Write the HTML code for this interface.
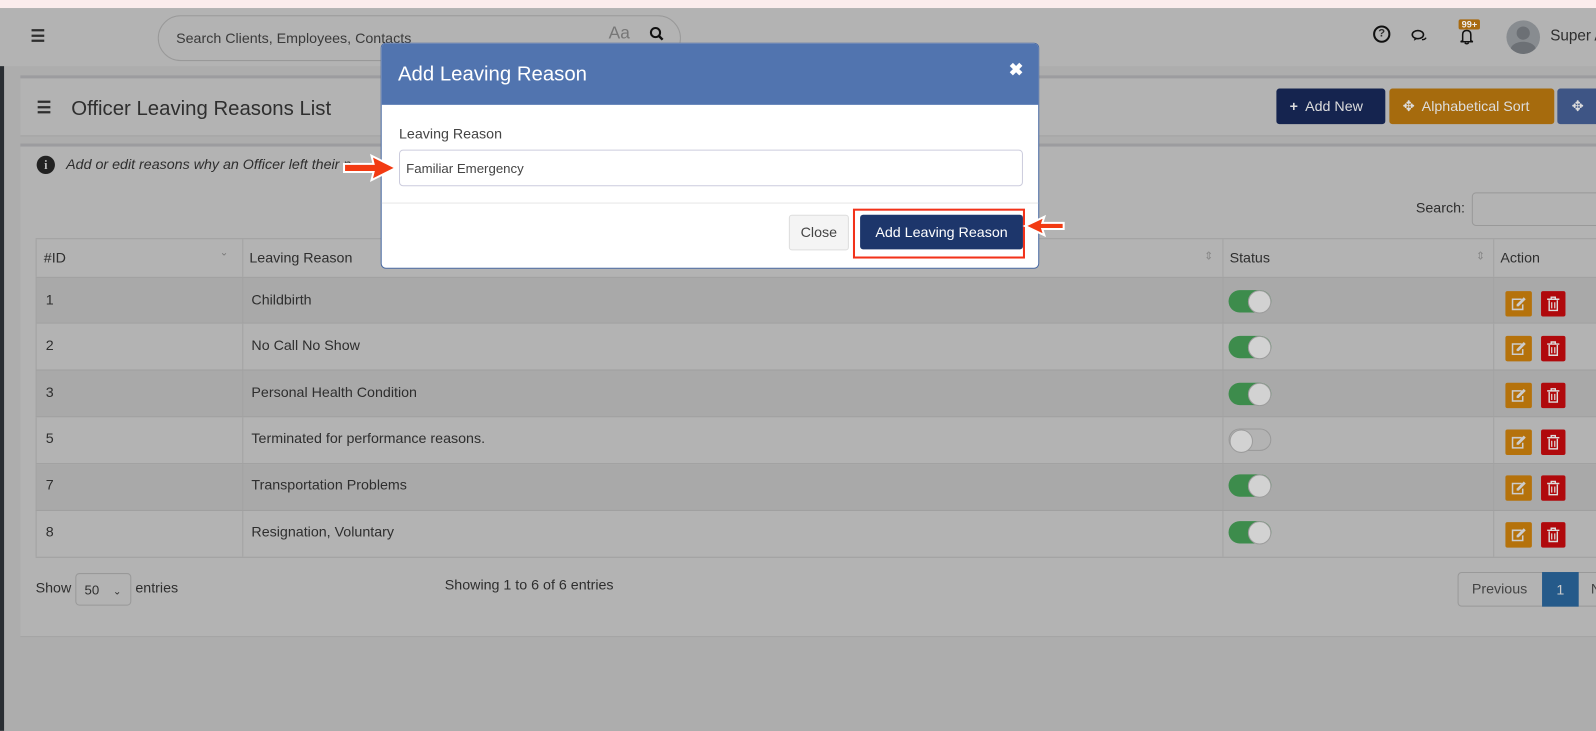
<!DOCTYPE html>
<html><head><meta charset="utf-8"><style>
*{box-sizing:border-box;margin:0;padding:0}
html,body{width:1596px;height:718px;overflow:hidden;background:#adadad}
#w{position:absolute;left:0;top:0;width:1600px;height:706px;transform:scale(1.01786);transform-origin:0 0;font-family:"Liberation Sans",sans-serif;color:#2e2e2e;font-size:14px}
.a{position:absolute;white-space:nowrap}
.row{position:absolute;left:35px;width:1561px;height:46px;border-bottom:1px solid #a0a0a0}
.cell{position:absolute;top:0;height:100%;border-left:1px solid #a3a3a3}
.tog{position:absolute;left:1207px;width:42px;height:22px;border-radius:11px;background:#3d8c4c}
.tog::after{content:"";position:absolute;right:0;top:0;width:21px;height:21px;border-radius:50%;background:#d2d2d2;border:1px solid #9c9c9c}
.tog.off{background:#b3b3b3;border:1px solid #999}
.tog.off::after{left:0;right:auto}
.ed{position:absolute;left:1479px;width:26px;height:25px;background:#b5720b;border-radius:2px}
.dl{position:absolute;left:1514px;width:24px;height:25px;background:#b0090c;border-radius:2px}
.ed svg,.dl svg{position:absolute;left:5px;top:5px}
</style></head><body><div id="w">
<div class="a" style="left:0;top:0;width:1600px;height:8px;background:#fbecec"></div>
<div class="a" style="left:0;top:8px;width:1600px;height:57px;background:#b3b3b3"></div>
<div class="a" style="left:30px;top:26px;font-size:16px;font-weight:bold">&#9776;</div>
<div class="a" style="left:155px;top:15px;width:514px;height:45px;border:1px solid #999;border-radius:23px;"></div>
<div class="a" style="left:173px;top:29px;font-size:14px;color:#3a3a3a">Search Clients, Employees, Contacts</div>
<div class="a" style="left:598px;top:23px;font-size:17px;color:#777">Aa</div>
<svg class="a" style="left:638px;top:26px" width="14" height="14"><circle cx="6" cy="6" r="4.5" fill="none" stroke="#111" stroke-width="2"/><path d="M9 9 L13 13" stroke="#111" stroke-width="2.4"/></svg>
<div class="a" style="left:1349px;top:25px;width:17px;height:17px;border:2px solid #111;border-radius:50%;font-size:11px;font-weight:bold;text-align:center;line-height:13px">?</div>
<svg class="a" style="left:1386px;top:28px" width="16" height="14"><ellipse cx="7" cy="6" rx="5.5" ry="4" fill="none" stroke="#111" stroke-width="1.6"/><path d="M4 9 L3 12 L7 10" fill="#111"/><path d="M11 11 Q14 11 15 9" fill="none" stroke="#111" stroke-width="1.4"/></svg>
<div class="a" style="left:1433px;top:19px;background:#a86a10;color:#eee;font-size:9px;padding:0 3px;border-radius:2px;font-weight:bold">99+</div>
<svg class="a" style="left:1434px;top:28px" width="14" height="16"><path d="M3 12 L3 6 Q3 2 7 2 Q11 2 11 6 L11 12 L13 13 L1 13 Z" fill="none" stroke="#111" stroke-width="1.5"/><path d="M5 14 Q7 16 9 14" fill="none" stroke="#111" stroke-width="1.3"/></svg>
<div class="a" style="left:1480px;top:20px;width:33px;height:33px;border-radius:50%;background:#888c90;overflow:hidden"><div class="a" style="left:10px;top:6px;width:13px;height:13px;border-radius:50%;background:#6c7075"></div><div class="a" style="left:4px;top:21px;width:25px;height:16px;border-radius:50%;background:#6c7075"></div></div>
<div class="a" style="left:1523px;top:27px;font-size:15px">Super A</div>
<div class="a" style="left:0;top:65px;width:4px;height:653px;background:#2a2e33"></div>

<div class="a" style="left:20px;top:74px;width:1580px;height:60px;background:#b3b3b3;border-top:3px solid #9c9c9f;border-bottom:1px solid #a2a2a2"></div>
<div class="a" style="left:36px;top:96px;font-size:16px;font-weight:bold">&#9776;</div>
<div class="a" style="left:70px;top:96px;font-size:20px;color:#2f2f2f">Officer Leaving Reasons List</div>
<div class="a" style="left:1254px;top:87px;width:107px;height:35px;background:#15244f;border-radius:3px;color:#ddd;font-size:14px;line-height:35px;padding-left:13px"><b>+</b>&nbsp; Add New</div>
<div class="a" style="left:1365px;top:87px;width:162px;height:35px;background:#a66b0d;border-radius:3px;color:#ddd;font-size:14px;line-height:35px;padding-left:13px">&#10021;&nbsp; Alphabetical Sort</div>
<div class="a" style="left:1530px;top:87px;width:70px;height:35px;background:#3e5585;border-radius:3px;color:#ddd;line-height:35px;padding-left:14px">&#10021;</div>

<div class="a" style="left:20px;top:141px;width:1580px;height:485px;background:#b3b3b3;border-top:3px solid #9c9c9f;border-bottom:1px solid #a2a2a2"></div>
<div class="a" style="left:36px;top:153px;width:18px;height:18px;border-radius:50%;background:#222;color:#bbb;font-size:12px;font-weight:bold;text-align:center;line-height:18px;font-family:'Liberation Serif',serif">i</div>
<div class="a" style="left:65px;top:153px;font-size:14px;font-style:italic">Add or edit reasons why an Officer left their p</div>
<div class="a" style="left:1391px;top:196px;font-size:14px">Search:</div>
<div class="a" style="left:1446px;top:189px;width:160px;height:33px;border:1px solid #999;border-radius:4px"></div>

<div class="row" style="top:234px;height:39px;background:#b3b3b3;border-top:1px solid #a0a0a0"><div class="cell" style="left:0"></div><div class="cell" style="left:203px"></div><div class="cell" style="left:1166px"></div><div class="cell" style="left:1432px"></div></div>
<div class="a" style="left:43px;top:245px">#ID</div><div class="a" style="left:216px;top:243px;font-size:10px;color:#777">&#8964;</div>
<div class="a" style="left:245px;top:245px">Leaving Reason</div><div class="a" style="left:1183px;top:245px;font-size:11px;color:#888">&#8661;</div>
<div class="a" style="left:1208px;top:245px">Status</div><div class="a" style="left:1450px;top:245px;font-size:11px;color:#888">&#8661;</div>
<div class="a" style="left:1474px;top:245px">Action</div>

<div class="row" style="top:273px;height:45px;background:#a9a9a9"><div class="cell" style="left:0"></div><div class="cell" style="left:203px"></div><div class="cell" style="left:1166px"></div><div class="cell" style="left:1432px"></div></div>
<div class="row" style="top:318px;background:#b3b3b3"><div class="cell" style="left:0"></div><div class="cell" style="left:203px"></div><div class="cell" style="left:1166px"></div><div class="cell" style="left:1432px"></div></div>
<div class="row" style="top:364px;background:#a9a9a9"><div class="cell" style="left:0"></div><div class="cell" style="left:203px"></div><div class="cell" style="left:1166px"></div><div class="cell" style="left:1432px"></div></div>
<div class="row" style="top:410px;background:#b3b3b3"><div class="cell" style="left:0"></div><div class="cell" style="left:203px"></div><div class="cell" style="left:1166px"></div><div class="cell" style="left:1432px"></div></div>
<div class="row" style="top:456px;background:#a9a9a9"><div class="cell" style="left:0"></div><div class="cell" style="left:203px"></div><div class="cell" style="left:1166px"></div><div class="cell" style="left:1432px"></div></div>
<div class="row" style="top:502px;background:#b3b3b3"><div class="cell" style="left:0"></div><div class="cell" style="left:203px"></div><div class="cell" style="left:1166px"></div><div class="cell" style="left:1432px"></div></div>

<div class="a" style="left:45px;top:286px">1</div><div class="a" style="left:247px;top:286px">Childbirth</div>
<div class="a" style="left:45px;top:331px">2</div><div class="a" style="left:247px;top:331px">No Call No Show</div>
<div class="a" style="left:45px;top:377px">3</div><div class="a" style="left:247px;top:377px">Personal Health Condition</div>
<div class="a" style="left:45px;top:422px">5</div><div class="a" style="left:247px;top:422px">Terminated for performance reasons.</div>
<div class="a" style="left:45px;top:468px">7</div><div class="a" style="left:247px;top:468px">Transportation Problems</div>
<div class="a" style="left:45px;top:514px">8</div><div class="a" style="left:247px;top:514px">Resignation, Voluntary</div>

<div class="tog" style="top:285px"></div><div class="tog" style="top:330px"></div><div class="tog" style="top:376px"></div><div class="tog off" style="top:421px"></div><div class="tog" style="top:466px"></div><div class="tog" style="top:512px"></div>

<div id="acts"></div>
<script>
var t=[286,330,376,422,467,513],h='';
var e='<svg width="16" height="15"><path d="M11 3 L2 3 L2 13 L12 13 L12 8" fill="none" stroke="#ccc" stroke-width="1.5"/><path d="M6 10 L6 8 L13 1 L15 3 L8 10 Z" fill="#ccc"/></svg>';
var d='<svg width="14" height="15"><path d="M1 3 L13 3 M5 3 L5 1 L9 1 L9 3" stroke="#ddd" stroke-width="1.4" fill="none"/><path d="M3 4 L3 14 L11 14 L11 4" stroke="#ddd" stroke-width="1.4" fill="none"/><path d="M5.5 6 L5.5 12 M8.5 6 L8.5 12" stroke="#ddd" stroke-width="1.2"/></svg>';
t.forEach(function(y){h+='<div class="ed" style="top:'+y+'px">'+e+'</div><div class="dl" style="top:'+y+'px">'+d+'</div>';});
document.getElementById('acts').innerHTML=h;
</script>

<div class="a" style="left:35px;top:569px">Show</div>
<div class="a" style="left:74px;top:563px;width:55px;height:32px;border:1px solid #999;border-radius:4px;font-size:13px;padding:8px 0 0 8px">50 <span style="margin-left:10px;font-size:10px">&#8964;</span></div>
<div class="a" style="left:133px;top:569px">entries</div>
<div class="a" style="left:437px;top:566px">Showing 1 to 6 of 6 entries</div>
<div class="a" style="left:1432px;top:562px;width:170px;height:34px;border:1px solid #999;border-radius:4px"></div>
<div class="a" style="left:1446px;top:570px;color:#444">Previous</div>
<div class="a" style="left:1515px;top:562px;width:36px;height:34px;background:#255a8a;color:#ccc;text-align:center;line-height:34px">1</div>
<div class="a" style="left:1563px;top:570px;color:#444">N</div>

<div class="a" style="left:374px;top:42px;width:647px;height:222px;background:#fff;border:1px solid #4a6aa3;border-radius:5px;overflow:hidden">
 <div class="a" style="left:0;top:0;width:647px;height:60px;background:#5174af"></div>
 <div class="a" style="left:16px;top:19px;font-size:20px;color:#fff">Add Leaving Reason</div>
 <div class="a" style="left:616px;top:16px;font-size:17px;color:#fff;font-weight:bold">&#10006;</div>
 <div class="a" style="left:17px;top:80px;color:#444">Leaving Reason</div>
 <div class="a" style="left:17px;top:104px;width:613px;height:36px;border:1px solid #ccd;border-radius:4px"></div>
 <div class="a" style="left:24px;top:115px;font-size:13px;color:#444">Familiar Emergency</div>
 <div class="a" style="left:0;top:156px;width:647px;height:1px;background:#e6e6e6"></div>
 <div class="a" style="left:400px;top:168px;width:59px;height:35px;background:#f4f4f4;border:1px solid #ddd;border-radius:3px;text-align:center;line-height:33px;color:#444">Close</div>
 <div class="a" style="left:470px;top:168px;width:160px;height:34px;background:#1d366b;border-radius:3px;text-align:center;line-height:34px;color:#fff">Add Leaving Reason</div>
</div>
<div class="a" style="left:838px;top:205px;width:169px;height:49px;border:2px solid #f2321a"></div>
<svg class="a" style="left:335px;top:150px" width="58" height="30"><path d="M3 11 L32 11 L30 3 L54 15 L30 27 L32 19 L3 19 Z" fill="#f23a12" stroke="#fff" stroke-width="2"/></svg>
<svg class="a" style="left:1004px;top:210px" width="44" height="24"><path d="M41 9 L20 9 L22 3 L3 12 L22 21 L20 15 L41 15 Z" fill="#f23a12" stroke="#fff" stroke-width="2"/></svg>
</div></body></html>
